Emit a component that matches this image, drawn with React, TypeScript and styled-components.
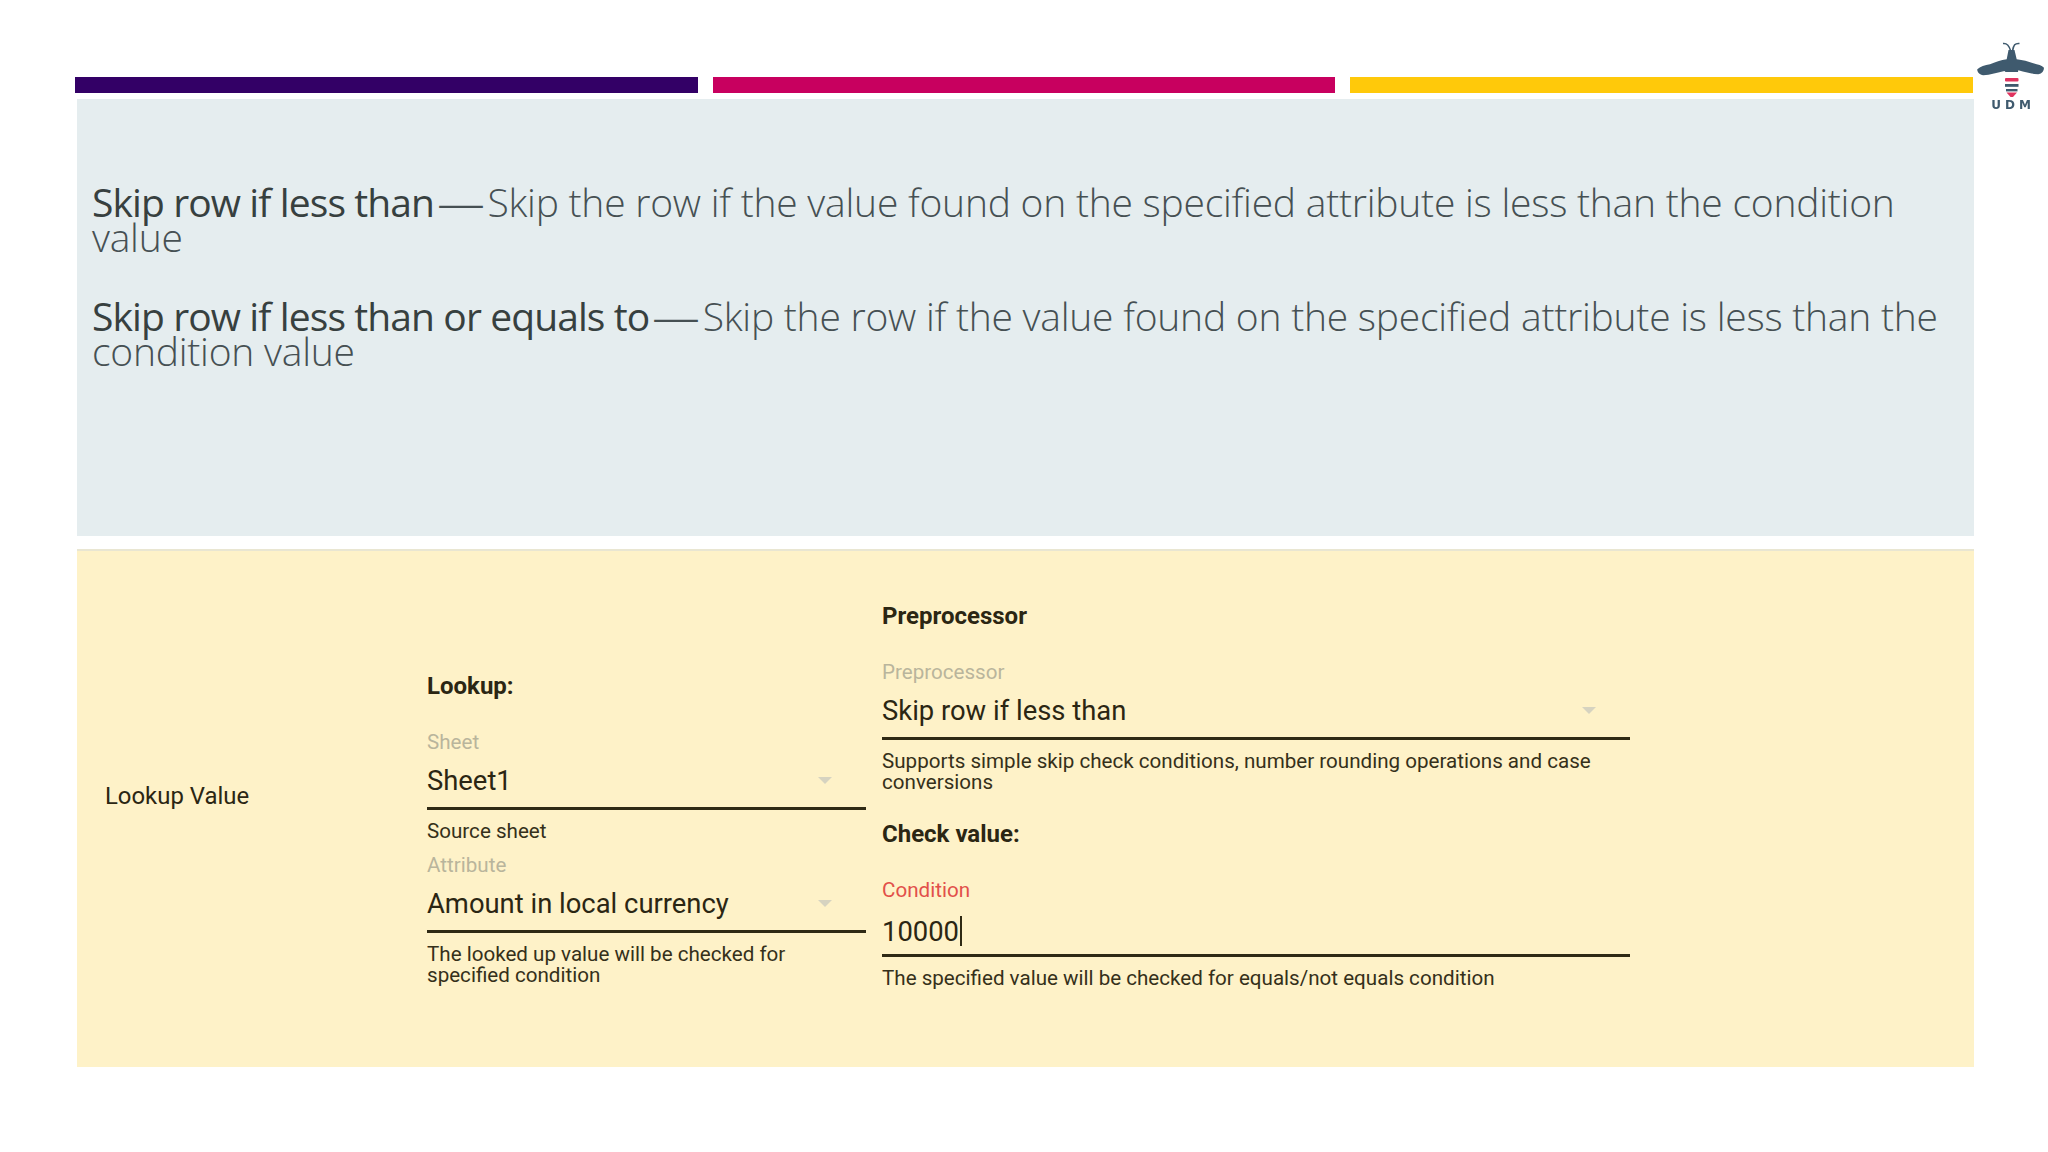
import React from 'react';
import styled, { createGlobalStyle } from 'styled-components';

const GlobalStyle = createGlobalStyle`
  html, body {
    margin: 0;
    padding: 0;
    background: #ffffff;
  }
`;

const Slide = styled.div`
  width: 2048px;
  height: 1152px;
  padding-top: 77px;
  box-sizing: border-box;
  overflow: hidden;
`;

const Bars = styled.div`
  display: flex;
  gap: 15px;
  width: 1898px;
  margin-left: 75px;
`;

const Bar = styled.div<{ $color: string }>`
  flex: 1;
  height: 16px;
  background: ${(p) => p.$color};
`;

// sits over the end of the bars, in the slide corner
const LogoBox = styled.div`
  position: absolute;
  left: 1976px;
  top: 42px;
  width: 70px;
  display: flex;
  flex-direction: column;
  align-items: center;
  filter: blur(0.4px);
`;

const LogoText = styled.span`
  font-family: 'DejaVu Sans', sans-serif;
  font-weight: 700;
  font-size: 12px;
  letter-spacing: 4px;
  margin-top: -1px;
  margin-right: -4px;
  line-height: 11px;
  color: #3f5a6e;
`;

const InfoPanel = styled.div`
  margin: 6px 0 0 77px;
  width: 1897px;
  height: 437px;
  box-sizing: border-box;
  padding: 85px 15px 0;
  background: #e5edef;
  font-family: 'Open Sans', sans-serif;
  font-weight: 300;
  font-size: 39px;
  line-height: 35px;
  letter-spacing: -0.23px;
  color: #465053;
`;

const Para = styled.p`
  margin: 0 0 44px;
`;

const Term = styled.span`
  font-weight: 400;
  letter-spacing: -0.9px;
  color: #37403f;
`;

const Dash = styled.span`
  margin: 0 3px;
  font-size: 47.5px;
  vertical-align: -3px;
`;

const FormPanel = styled.div`
  margin: 13px 0 0 77px;
  width: 1897px;
  height: 518px;
  box-sizing: border-box;
  display: flex;
  align-items: flex-start;
  background: #fef2c8;
  border-top: 2px solid #e9e6d2;
  font-family: Roboto, sans-serif;
  color: #2b2613;
`;

const RowLabel = styled.div`
  width: 350px;
  padding: 231px 0 0 28px;
  box-sizing: border-box;
  font-size: 23.9px;
  line-height: 28px;
`;

const Column = styled.div<{ $width: number; $top: number }>`
  width: ${(p) => p.$width}px;
  padding-top: ${(p) => p.$top}px;
  margin-right: 16px;
`;

const Heading = styled.div<{ $top?: number }>`
  font-size: 24px;
  font-weight: 700;
  line-height: 26px;
  margin-top: ${(p) => p.$top ?? 0}px;
  margin-bottom: 30px;
`;

const Field = styled.div`
  margin-bottom: 10px;
`;

const FieldLabel = styled.div<{ $error?: boolean }>`
  font-size: 20.6px;
  line-height: 24px;
  padding-top: 1px;
  color: ${(p) => (p.$error ? '#e2504a' : '#b9b59c')};
`;

const Control = styled.div`
  display: flex;
  align-items: center;
  justify-content: space-between;
  height: 45px;
  margin-top: 4px;
  padding: 0 34px 4px 0;
  border-bottom: 3px solid #2f2a14;
  font-size: 27.4px;
  line-height: 36px;
`;

const InputControl = styled(Control)`
  height: 45px;
  padding: 3px 0 0;
`;

const Arrow = styled.span`
  width: 0;
  height: 0;
  border-left: 7px solid transparent;
  border-right: 7px solid transparent;
  border-top: 7px solid #d6d3c0;
`;

const Caret = styled.span`
  display: inline-block;
  width: 2px;
  height: 30px;
  margin-left: 1px;
  vertical-align: -5px;
  background: #2f2a14;
`;

const Help = styled.div`
  margin-top: 11px;
  font-size: 20.6px;
  line-height: 21px;
  color: #35301a;
`;

const BeeLogo = () => (
  <svg width="70" height="59" viewBox="0 0 70 59">
    <path d="M27 1.5 C31 1 33 3 34.7 9 M43.5 1.5 C39 1 37.5 3 36.5 9" fill="none" stroke="#3f5a6e" strokeWidth="1.6" />
    <path
      d="M32.5 8 H38.5 L40.7 17.3 C47 18 52 19.5 57.3 21.3 C62 22.5 66 23.5 68 25.7 C68 29 66 31.5 62.3 32.3 C56 32 49 30 42.3 28.3 L42 30 H29.5 L28.5 29 C22 30.5 14 33 7.3 33.3 C3.5 32.5 1 30 1.3 27.3 C4 24.5 9 23 14 22.3 C19 20.5 25 18 30.7 17.3 Z"
      fill="#3f5a6e"
    />
    <rect x="29" y="36" width="13.5" height="3.5" rx="1" fill="#e0335f" />
    <rect x="29" y="42" width="13.5" height="2.8" fill="#3f5a6e" />
    <rect x="30" y="47" width="11.5" height="2.4" fill="#3f5a6e" />
    <path d="M30.5 50.5 H41 L37 55 H34.5 Z" fill="#e0335f" />
  </svg>
);

export default function App() {
  return (
    <Slide>
      <GlobalStyle />
      <Bars>
        <Bar $color="#330066" />
        <Bar $color="#c8005f" />
        <Bar $color="#ffc90a" />
      </Bars>
      <LogoBox>
        <BeeLogo />
        <LogoText>UDM</LogoText>
      </LogoBox>
      <InfoPanel>
        <Para>
          <Term>Skip row if less than</Term>
          <Dash>—</Dash>Skip the row if the value found on the specified attribute is less than the condition value
        </Para>
        <Para>
          <Term>Skip row if less than or equals to</Term>
          <Dash>—</Dash>Skip the row if the value found on the specified attribute is less than the condition value
        </Para>
      </InfoPanel>
      <FormPanel>
        <RowLabel>Lookup Value</RowLabel>
        <Column $width={439} $top={122}>
          <Heading>Lookup:</Heading>
          <Field>
            <FieldLabel>Sheet</FieldLabel>
            <Control>
              Sheet1
              <Arrow />
            </Control>
            <Help>Source sheet</Help>
          </Field>
          <Field>
            <FieldLabel>Attribute</FieldLabel>
            <Control>
              Amount in local currency
              <Arrow />
            </Control>
            <Help>The looked up value will be checked for specified condition</Help>
          </Field>
        </Column>
        <Column $width={748} $top={52}>
          <Heading>Preprocessor</Heading>
          <Field>
            <FieldLabel>Preprocessor</FieldLabel>
            <Control>
              Skip row if less than
              <Arrow />
            </Control>
            <Help>Supports simple skip check conditions, number rounding operations and case conversions</Help>
          </Field>
          <Heading $top={28}>Check value:</Heading>
          <Field>
            <FieldLabel $error>Condition</FieldLabel>
            <InputControl>
              <span>
                10000
                <Caret />
              </span>
            </InputControl>
            <Help>The specified value will be checked for equals/not equals condition</Help>
          </Field>
        </Column>
      </FormPanel>
    </Slide>
  );
}
